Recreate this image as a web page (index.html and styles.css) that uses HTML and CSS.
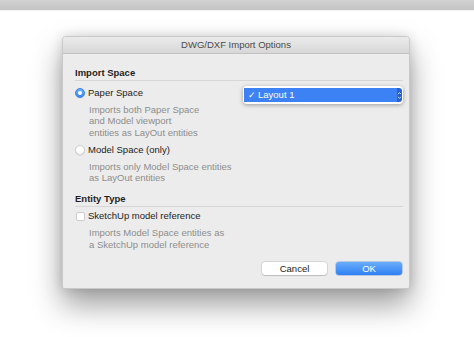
FILE: index.html
```html
<!DOCTYPE html>
<html lang="en">
<head>
    <meta charset="UTF-8">
    <title>DWG/DXF Import Options</title>
    <link rel="stylesheet" href="styles.css">
</head>
<body>
    <div class="topbar"></div>
    <div class="stage">
        <div class="dialog">
            <div class="titlebar">DWG/DXF Import Options</div>
            <div class="content">
                <div class="section-title">Import Space</div>
                <div class="option-row">
                    <div class="option">
                        <div class="choice">
                            <span class="radio radio-on"></span>
                            <span class="label">Paper Space</span>
                        </div>
                        <p class="desc">Imports both Paper Space<br>and Model viewport<br>entities as LayOut entities</p>
                    </div>
                    <div class="popup">
                        <div class="popup-item"><span class="check">✓</span>Layout 1</div>
                        <div class="popup-arrows">
                            <svg width="5" height="9" viewBox="0 0 5 9">
                                <path d="M1 3.2 L2.5 1.6 L4 3.2" fill="none" stroke="#fff" stroke-width="0.8"/>
                                <path d="M1 5.8 L2.5 7.4 L4 5.8" fill="none" stroke="#fff" stroke-width="0.8"/>
                            </svg>
                        </div>
                    </div>
                </div>
                <div class="option option-second">
                    <div class="choice">
                        <span class="radio"></span>
                        <span class="label">Model Space (only)</span>
                    </div>
                    <p class="desc">Imports only Model Space entities<br>as LayOut entities</p>
                </div>

                <div class="section-title section-gap">Entity Type</div>
                <div class="option option-check">
                    <div class="choice">
                        <span class="checkbox"></span>
                        <span class="label">SketchUp model reference</span>
                    </div>
                    <p class="desc desc-loose">Imports Model Space entities as<br>a SketchUp model reference</p>
                </div>

                <div class="buttons">
                    <button class="btn">Cancel</button>
                    <button class="btn btn-primary">OK</button>
                </div>
            </div>
        </div>
    </div>
</body>
</html>
```

FILE: styles.css
```css
html, body {
    margin: 0;
    height: 100%;
}
body {
    background-color: #ffffff;
    font-family: 'Liberation Sans', Arial, sans-serif;
    font-size: 9.5px;
    color: #222222;
    overflow: hidden;
}
.topbar {
    height: 10px;
    background: linear-gradient(#d2d2d2, #c3c3c3);
    border-bottom: 1px solid #f2f2f2;
}
.stage {
    padding: 25px 0 0 62px;
}
.dialog {
    width: 346px;
    background-color: #ececec;
    border: 1px solid #c9c9c9;
    border-radius: 4px 4px 2px 2px;
    box-shadow: 0 16px 30px rgba(0, 0, 0, 0.38), 0 0 12px rgba(0, 0, 0, 0.14);
    overflow: hidden;
}
.titlebar {
    height: 16px;
    line-height: 16px;
    text-align: center;
    color: #4a4a4a;
    background: linear-gradient(#ebebeb, #d7d7d7);
    border-bottom: 1px solid #c2c2c2;
}
.content {
    padding: 13px 6px 13px 12px;
}
.section-title {
    font-weight: bold;
    line-height: 12px;
    padding-bottom: 1px;
    border-bottom: 1px solid #d6d6d6;
    color: #1e1e1e;
}
.section-gap {
    margin-top: 9px;
}
.option-row {
    display: flex;
    justify-content: space-between;
    align-items: flex-start;
    margin-top: 6px;
}
.option-second {
    margin-top: 6px;
}
.option-check {
    margin-top: 3.5px;
}
.choice {
    display: flex;
    align-items: center;
    height: 12px;
}
.label {
    margin-left: 3px;
    line-height: 12px;
}
.radio {
    width: 10px;
    height: 10px;
    border-radius: 50%;
    box-sizing: border-box;
    background: #ffffff;
    border: 1px solid #cfcfcf;
    box-shadow: 0 0.5px 1px rgba(0, 0, 0, 0.12);
    display: flex;
    align-items: center;
    justify-content: center;
}
.radio-on {
    background: linear-gradient(#6aaefa, #3a86f5);
    border-color: #3a80ee;
}
.radio-on::after {
    content: '';
    width: 4px;
    height: 4px;
    border-radius: 50%;
    background: #ffffff;
}
.checkbox {
    width: 9px;
    height: 9px;
    box-sizing: border-box;
    background: #ffffff;
    border: 1px solid #cdcdcd;
    border-radius: 2px;
    margin-left: 1px;
}
.desc {
    margin: 4.5px 0 0 14px;
    line-height: 11.5px;
    color: #8c8c8c;
}
.desc-loose {
    line-height: 12.5px;
}
.popup {
    display: flex;
    width: 160px;
    height: 18px;
    box-sizing: border-box;
    padding: 2px 1px;
    margin-top: -1px;
    background: #ffffff;
    border-radius: 4px;
    box-shadow: 0 1px 4px rgba(0, 0, 0, 0.35);
}
.popup-item {
    flex: 1;
    background-color: #3d82f4;
    color: #ffffff;
    line-height: 14px;
    padding-left: 4px;
}
.check {
    display: inline-block;
    width: 10px;
    font-size: 9px;
}
.popup-arrows {
    width: 5px;
    background-color: #2a5fd3;
    border-radius: 0 3px 3px 0;
    display: flex;
    align-items: center;
    justify-content: center;
}
.buttons {
    display: flex;
    justify-content: flex-end;
    gap: 9px;
    margin-top: 10.5px;
    padding-right: 1px;
}
.btn {
    font-family: inherit;
    font-size: 9.5px;
    height: 13px;
    width: 65px;
    padding: 0;
    line-height: 13px;
    border: none;
    border-radius: 3px;
    background: #ffffff;
    color: #222222;
    box-shadow: 0 0 0 0.5px rgba(0, 0, 0, 0.18), 0 1px 1px rgba(0, 0, 0, 0.12);
}
.btn-primary {
    width: 66px;
    color: #ffffff;
    background: linear-gradient(#69aefa, #2f7ff4);
    box-shadow: 0 0 0 0.5px rgba(30, 90, 200, 0.5);
}
```
